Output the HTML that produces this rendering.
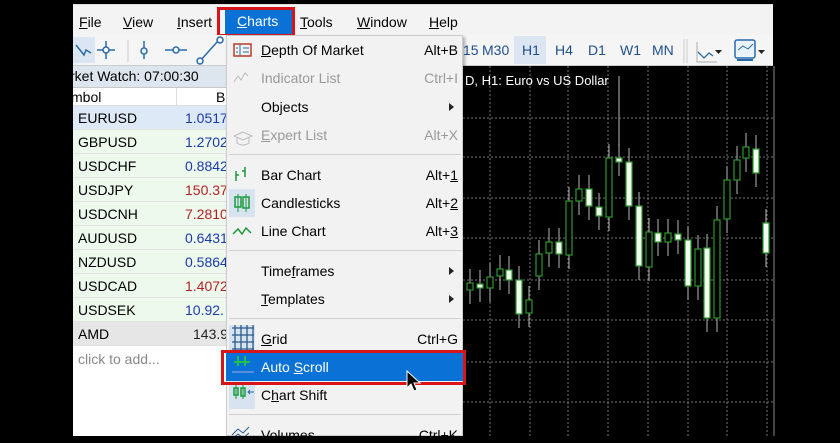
<!DOCTYPE html>
<html><head><meta charset="utf-8"><style>
*{margin:0;padding:0;box-sizing:border-box}
body{width:840px;height:436px;background:#000;position:relative;overflow:hidden;font-family:"Liberation Sans",sans-serif;font-size:14px;color:#000}
.a{position:absolute}
.menu span{position:absolute;top:9px;font-size:14px}
.row{position:absolute;left:73px;width:154px;height:24px;border-bottom:1px solid #e2e2e2}
.sym{position:absolute;left:78px;font-size:14px}
.bid{position:absolute;font-size:14px}
.mi{position:absolute;left:261px;font-size:14px}
.sc{position:absolute;right:382px;font-size:14px;text-align:right}
.sep{position:absolute;left:229px;width:232px;height:1px;background:#d0d0d0}
.tf span{position:absolute;top:42px;font-size:14px;color:#1f4f8f}
</style></head><body>
<div class="a" style="left:73px;top:4px;width:700px;height:432px;background:#f0f0f0"></div>
<div class="a menu" style="left:73px;top:4px;width:700px;height:31px;background:#f3f3f3;border-top:1px solid #ddd">
<span style="left:6px"><u>F</u>ile</span><span style="left:50px"><u>V</u>iew</span><span style="left:104px"><u>I</u>nsert</span><span style="left:227px"><u>T</u>ools</span><span style="left:284px"><u>W</u>indow</span><span style="left:356px"><u>H</u>elp</span>
</div>
<div class="a" style="left:225px;top:10px;width:67px;height:25px;background:#0a72d6"></div>
<div class="a" style="left:237px;top:13px;color:#fff"><u>C</u>harts</div>
<div class="a" style="left:217px;top:7px;width:78px;height:30px;border:3px solid #d6141a"></div>
<div class="a" style="left:73px;top:35px;width:700px;height:31px;background:#f5f5f5;border-bottom:1px solid #ccc"></div>
<svg class="a" style="left:73px;top:35px" width="160" height="31"><g stroke="#2a6aa8" stroke-width="1.5" fill="none">
<rect x="0" y="2" width="22" height="26" fill="#dbe6f2" stroke="none"/>
<path d="M3 10 l8 10 l2-5 l5 3"/>
<path d="M24 15 h18 M33 6 v18"/><circle cx="33" cy="15" r="3" fill="#f5f5f5"/>
<path d="M71 6 v18"/><circle cx="71" cy="16" r="3" fill="#f5f5f5"/>
<path d="M92 15 h22"/><circle cx="103" cy="15" r="3" fill="#f5f5f5"/>
<path d="M127 26 l18 -20"/><circle cx="127" cy="26" r="3" fill="#f5f5f5"/><circle cx="147" cy="5" r="3" fill="#f5f5f5"/>
</g><path d="M55 5 v22" stroke="#ccc"/></svg>
<div class="tf"><span style="left:463px">15</span><span style="left:482px">M30</span>
<div class="a" style="left:514px;top:36px;width:32px;height:28px;background:#dbe6f2"></div>
<span style="left:522px">H1</span><span style="left:555px">H4</span><span style="left:588px">D1</span><span style="left:620px">W1</span><span style="left:652px">MN</span></div>
<svg class="a" style="left:682px;top:36px" width="90" height="30"><path d="M2 3 v24 M5 3 v24" stroke="#ccc"/>
<path d="M15 6 v20 h20" stroke="#aaa" fill="none"/><path d="M16 16 l6 6 l5-5 l4 3" stroke="#2a6aa8" fill="none" stroke-width="1.3"/><path d="M33 14 h7 l-3.5 4z" fill="#222"/>
<rect x="53" y="4" width="20" height="18" rx="2" fill="#eaf2fa" stroke="#2a6aa8" stroke-width="1.5"/><path d="M55 24 h16" stroke="#2a6aa8" stroke-width="2"/><path d="M56 14 l5-4 l5 3 l5-5" stroke="#2a6aa8" fill="none"/><path d="M76 14 h7 l-3.5 4z" fill="#222"/></svg>
<div class="a" style="left:73px;top:66px;width:154px;height:22px;background:#dde5ee;border-bottom:1px solid #c8c8c8"></div>
<div class="a" style="left:70px;top:68px;font-size:14px">rket Watch: 07:00:30</div>
<div class="a" style="left:73px;top:88px;width:154px;height:18px;background:#fff;border-bottom:1px solid #ddd"></div>
<div class="a" style="left:176px;top:88px;width:1px;height:258px;background:#ddd"></div>
<div class="a" style="left:71px;top:89px">mbol</div><div class="a" style="left:216px;top:89px">B</div>
<div class="a" style="left:73px;top:106px;width:154px;height:216px;background:#eef9ee"></div>
<div class="a" style="left:73px;top:106px;width:154px;height:24px;background:#dde9f6"></div>
<div class="a" style="left:73px;top:322px;width:154px;height:24px;background:#e6e6e6"></div>
<div class="a" style="left:73px;top:346px;width:154px;height:90px;background:#fff"></div>
<div class="a" style="left:78px;top:351px;color:#888">click to add...</div>
<div id="rows"></div>
<svg class="a" style="left:463px;top:66px" width="310" height="370">
<rect width="310" height="370" fill="#000"/>
<g stroke="#777" stroke-dasharray="2,2" stroke-width="1">
<path d="M27 0V370M67 0V370M105 0V370M145 0V370M185 0V370M225 0V370M264 0V370M304 0V370"/>
<path d="M0 52H310M0 91H310M0 132H310M0 172H310M0 214H310M0 254H310M0 296H310M0 336H310"/>
</g>
<g id="c" stroke-width="1.2"></g>
<text x="2" y="19" fill="#fff" font-size="13" font-family="Liberation Sans">D, H1:  Euro vs US Dollar</text>
</svg>
<div class="a" style="left:773px;top:66px;width:2px;height:370px;background:#444"></div>
<div class="a" style="left:226px;top:35px;width:237px;height:401px;background:#f2f2f2;border:1px solid #ccc;box-shadow:2px 2px 3px rgba(0,0,0,.3)"></div>
<div class="a" style="left:229px;top:189px;width:26px;height:28px;background:#d7e3ef"></div>
<div class="a" style="left:229px;top:325px;width:26px;height:28px;background:#d7e3ef"></div>
<div class="a" style="left:229px;top:381px;width:26px;height:28px;background:#d7e3ef"></div>
<div class="a" style="left:226px;top:353px;width:237px;height:28px;background:#0a72d6"></div>
<div class="sep" style="top:154px"></div><div class="sep" style="top:250px"></div><div class="sep" style="top:318px"></div><div class="sep" style="top:414px"></div>
<div class="mi" style="top:42px"><u>D</u>epth Of Market</div><div class="sc" style="top:42px">Alt+B</div>
<div class="mi" style="top:70px;color:#999">Indicator List</div><div class="sc" style="top:70px;color:#999">Ctrl+I</div>
<div class="mi" style="top:99px">Objects</div>
<div class="mi" style="top:127px;color:#999"><u>E</u>xpert List</div><div class="sc" style="top:127px;color:#999">Alt+X</div>
<div class="mi" style="top:167px">Bar Chart</div><div class="sc" style="top:167px">Alt+<u>1</u></div>
<div class="mi" style="top:195px">Candlesticks</div><div class="sc" style="top:195px">Alt+<u>2</u></div>
<div class="mi" style="top:223px">Line Chart</div><div class="sc" style="top:223px">Alt+<u>3</u></div>
<div class="mi" style="top:263px">Time<u>f</u>rames</div>
<div class="mi" style="top:291px"><u>T</u>emplates</div>
<div class="mi" style="top:331px"><u>G</u>rid</div><div class="sc" style="top:331px">Ctrl+G</div>
<div class="mi" style="top:359px;color:#fff">Auto <u>S</u>croll</div>
<div class="mi" style="top:387px">C<u>h</u>art Shift</div>
<div class="mi" style="top:427px">Volumes</div><div class="sc" style="top:427px">Ctrl+K</div>
<svg class="a" style="left:226px;top:35px" width="237" height="401">
<g fill="#222"><path d="M223 68 l5 4 l-5 4z"/><path d="M223 232 l5 4 l-5 4z"/><path d="M223 260 l5 4 l-5 4z"/></g>
<rect x="8" y="9" width="17" height="12" fill="none" stroke="#c0392b" stroke-width="1.5"/><path d="M14 9v12M10 13h2M10 17h2M17 13h6M17 17h6" stroke="#2a6aa8"/>
<path d="M8 47 l4-6 l3 4 l4-7 l3 3" stroke="#bbb" fill="none"/>
<path d="M8 101 l9-4 l9 4 l-9 4z M11 103v5 q6 4 12 0v-5" stroke="#bbb" fill="none"/>
<path d="M10 136v10M10 140h3M19 132v10M16 136h3" stroke="#1a9a3a" stroke-width="1.5"/>
<path d="M12 159v18M20 159v18" stroke="#1a9a3a"/><rect x="9" y="162" width="6" height="10" fill="none" stroke="#1a9a3a" stroke-width="1.5"/><rect x="17" y="162" width="6" height="11" fill="none" stroke="#1a9a3a" stroke-width="1.5"/>
<path d="M7 199 l5-5 l4 5 l4-6 l5 5" stroke="#1a9a3a" fill="none" stroke-width="1.5"/>
<path d="M6 293h22M6 300h22M6 307h22M6 314h22M9 290v27M15 290v27M21 290v27M27 290v27" stroke="#2a5a8a" stroke-width="1.3"/>
<path d="M8 327h16M12 321v10M19 321v10" stroke="#1fc24a" stroke-width="2"/><path d="M6 337h22" stroke="#aad" />
<path d="M10 350v14M17 350v14" stroke="#1a9a3a"/><rect x="8" y="353" width="4" height="7" fill="none" stroke="#1a9a3a" stroke-width="1.5"/><rect x="15" y="353" width="4" height="8" fill="none" stroke="#1a9a3a" stroke-width="1.5"/><path d="M22 357h6M24 355l-2 2 2 2" stroke="#2a6aa8" fill="none"/>
<path d="M6 400 l6-6 l5 4 l6-6 M6 404 l6-5 l5 4 l6-5" stroke="#2a5a8a" fill="none"/>
</svg>
<div class="a" style="left:221px;top:350px;width:245px;height:35px;border:3px solid #d6141a"></div>
<svg class="a" style="left:405px;top:370px" width="18" height="24"><path d="M2 1 v17 l4-4 l3 7 l3-1 l-3-7 l6 0z" fill="#000" stroke="#fff" stroke-width="1"/></svg>
<script>
var R=[["EURUSD","1.0517","#1a3aa8"],["GBPUSD","1.2702","#1a3aa8"],["USDCHF","0.8842","#1a3aa8"],["USDJPY","150.37","#b22222"],["USDCNH","7.2810","#b22222"],["AUDUSD","0.6431","#1a3aa8"],["NZDUSD","0.5864","#1a3aa8"],["USDCAD","1.4072","#b22222"],["USDSEK","10.92.","#1a3aa8"],["AMD","143.9","#222"]];
var h="";R.forEach(function(r,i){var t=106+i*24;h+='<div class="row" style="top:'+t+'px"></div><div class="sym" style="top:'+(t+4)+'px">'+r[0]+'</div><div class="bid" style="left:'+(i==9?193:185)+'px;top:'+(t+4)+'px;color:'+r[2]+'">'+r[1]+'</div>';});
document.getElementById("rows").innerHTML=h;
var C=[[470,283,290,0],[480,284,288,1],[490,277,288,0],[500,269,276,0],[509,270,280,1],[519,280,314,1],[529,300,313,0],[539,254,276,0],[549,242,253,0],[559,242,254,1],[569,201,255,0],[579,189,201,0],[589,189,206,1],[599,207,216,1],[609,158,217,0],[619,158,162,1],[629,162,206,1],[639,206,266,1],[649,232,267,0],[658,233,242,1],[668,233,242,0],[678,234,240,1],[688,240,286,1],[698,249,286,0],[707,248,318,1],[717,220,318,0],[727,180,219,0],[737,160,180,0],[746,147,158,0],[756,149,173,1],[766,223,253,1]];
var s="";C.forEach(function(c){var x=c[0]-463,a=c[1]-66,b=c[2]-66;s+='<path d="M'+x+' '+(a-14)+'V'+(b+14)+'" stroke="#999"/>';s+='<rect x="'+(x-3)+'" y="'+a+'" width="6" height="'+Math.max(3,b-a)+'" fill="'+(c[3]?'#f2fff0':'#000')+'" stroke="#2a9a2a"/>';});
s+='<path d="M156 10V80" stroke="#999"/>';
document.getElementById("c").innerHTML=s;
</script>
</body></html>
